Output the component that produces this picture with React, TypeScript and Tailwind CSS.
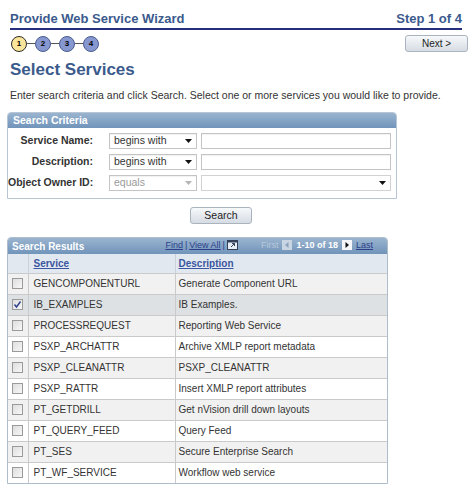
import React from 'react';

const rows = [
  { service: 'GENCOMPONENTURL', desc: 'Generate Component URL', checked: false },
  { service: 'IB_EXAMPLES', desc: 'IB Examples.', checked: true },
  { service: 'PROCESSREQUEST', desc: 'Reporting Web Service', checked: false },
  { service: 'PSXP_ARCHATTR', desc: 'Archive XMLP report metadata', checked: false },
  { service: 'PSXP_CLEANATTR', desc: 'PSXP_CLEANATTR', checked: false },
  { service: 'PSXP_RATTR', desc: 'Insert XMLP report attributes', checked: false },
  { service: 'PT_GETDRILL', desc: 'Get nVision drill down layouts', checked: false },
  { service: 'PT_QUERY_FEED', desc: 'Query Feed', checked: false },
  { service: 'PT_SES', desc: 'Secure Enterprise Search', checked: false },
  { service: 'PT_WF_SERVICE', desc: 'Workflow web service', checked: false },
];

function StepCircle({ n, active }: { n: number; active?: boolean }) {
  return (
    <div
      className={
        active
          ? 'flex h-[16px] w-[16px] items-center justify-center rounded-full border-[1.5px] border-[#2b2b2b] bg-[#fbe59a] text-[8px] font-bold text-black'
          : 'flex h-[16px] w-[16px] items-center justify-center rounded-full border-[1.5px] border-[#4c5b92] bg-[#8797cf] text-[8px] font-bold text-black'
      }
    >
      {n}
    </div>
  );
}

function Arrow({ disabled }: { disabled?: boolean }) {
  return (
    <svg width="7" height="4" viewBox="0 0 7 4" className="shrink-0">
      <path d="M0 0 L7 0 L3.5 4 Z" fill={disabled ? '#b5b5b5' : '#111'} />
    </svg>
  );
}

function SelectBox({ value, disabled }: { value: string; disabled?: boolean }) {
  return (
    <div className="flex h-[16px] w-[88px] items-center justify-between border border-[#c4c4c4] bg-white pl-[4px] pr-[4px] shadow-[inset_0_1px_1px_rgba(0,0,0,0.06)]">
      <span className={disabled ? 'text-[#9a9a9a]' : 'text-[#333]'}>{value}</span>
      <Arrow disabled={disabled} />
    </div>
  );
}

function CheckBox({ checked }: { checked: boolean }) {
  return (
    <div className="flex h-[11px] w-[11px] items-center justify-center border border-[#9a9a9a] bg-gradient-to-br from-[#dedede] to-[#f7f7f7]">
      {checked && (
        <svg width="9" height="9" viewBox="0 0 9 9">
          <path d="M1.5 4.5 L3.5 7 L7.5 1.5" stroke="#2b3f8c" strokeWidth="1.4" fill="none" />
        </svg>
      )}
    </div>
  );
}

export default function App() {
  return (
    <div className="min-h-[492px] w-[474px] bg-white font-['Liberation_Sans',Arial,sans-serif] text-[10.5px] text-[#333]">
      {/* title bar */}
      <div className="ml-[10px] mr-[12px] flex items-end justify-between border-b-2 border-[#272f7c] pt-[11px] pb-[2px] text-[13px] font-bold leading-[15px] text-[#3b5a8c]">
        <span>Provide Web Service Wizard</span>
        <span>Step 1 of 4</span>
      </div>

      {/* steps + next */}
      <div className="mt-[5px] ml-[11px] mr-[6px] flex items-center justify-between">
        <div className="flex items-center">
          <StepCircle n={1} active />
          <div className="h-px w-[8px] bg-[#555]" />
          <StepCircle n={2} />
          <div className="h-px w-[8px] bg-[#555]" />
          <StepCircle n={3} />
          <div className="h-px w-[8px] bg-[#555]" />
          <StepCircle n={4} />
        </div>
        <button className="flex h-[17px] w-[63px] items-center justify-center rounded-[3px] border border-[#a9b4bf] bg-gradient-to-b from-[#f7f9fb] to-[#d6dce3] text-[10px] text-[#222]">
          Next &gt;
        </button>
      </div>

      <h1 className="mt-[8px] ml-[10px] text-[17px] font-bold leading-[20px] text-[#3b5a8c]">Select Services</h1>

      <p className="mt-[9px] ml-[10px] text-[10.5px] leading-[12px] text-[#333]">
        Enter search criteria and click Search. Select one or more services you would like to provide.
      </p>

      {/* search criteria */}
      <div className="mt-[11px] ml-[7px] w-[390px] rounded-t-[4px] border border-[#b7c5d5]">
        <div className="h-[15px] rounded-t-[3px] bg-gradient-to-b from-[#9ab4cf] to-[#7194ba] pl-[5px] text-[10.5px] font-bold leading-[15px] text-white">
          Search Criteria
        </div>
        <div className="flex flex-col gap-[5px] pt-[5px] pb-[7px]">
          {[
            { label: 'Service Name:', op: 'begins with' },
            { label: 'Description:', op: 'begins with' },
          ].map((r) => (
            <div key={r.label} className="flex items-center">
              <div className="w-[85px] whitespace-nowrap text-right font-bold text-[#333]">{r.label}</div>
              <div className="ml-[16px]">
                <SelectBox value={r.op} />
              </div>
              <div className="ml-[4px] h-[16px] w-[190px] border border-[#c4c4c4] bg-white shadow-[inset_0_1px_1px_rgba(0,0,0,0.06)]" />
            </div>
          ))}
          <div className="flex items-center">
            <div className="w-[85px] whitespace-nowrap text-right font-bold text-[#333]">Object Owner ID:</div>
            <div className="ml-[16px]">
              <SelectBox value="equals" disabled />
            </div>
            <div className="ml-[4px] flex h-[16px] w-[190px] items-center justify-end border border-[#d2d2d2] bg-white pr-[4px]">
              <Arrow />
            </div>
          </div>
        </div>
      </div>

      <div className="mt-[8px] flex pl-[190px]">
        <button className="flex h-[17px] w-[62px] items-center justify-center rounded-[3px] border border-[#a9b4bf] bg-gradient-to-b from-[#f7f9fb] to-[#d6dce3] text-[10.5px] text-[#222]">
          Search
        </button>
      </div>

      {/* search results */}
      <div className="mt-[13px] ml-[7px] w-[381px] rounded-t-[4px] border border-[#aebccb]">
        <div className="flex h-[16px] items-center rounded-t-[3px] bg-gradient-to-b from-[#9ab4cf] to-[#7194ba] pl-[4px] pr-[14px] text-[10px]">
          <span className="font-bold text-white">Search Results</span>
          <span className="ml-auto flex items-center text-[9px]">
            <span className="text-[#2c3f8a] underline">Find</span>
            <span className="mx-[2px] text-[#2c3f8a]">|</span>
            <span className="text-[#2c3f8a] underline">View All</span>
            <span className="mx-[2px] text-[#2c3f8a]">|</span>
            <svg width="11" height="10" viewBox="0 0 11 10" className="mb-[3px]">
              <rect x="0.5" y="0.5" width="10" height="9" fill="#e8eef5" stroke="#33415a" />
              <rect x="0.5" y="0.5" width="10" height="2" fill="#33415a" />
              <path d="M4 7 L7.5 3.5 M5 3.5 L7.5 3.5 L7.5 6" stroke="#33415a" strokeWidth="1" fill="none" />
            </svg>
            <span className="ml-[23px] text-[#b7c8da]">First</span>
            <svg width="10" height="10" viewBox="0 0 10 10" className="mb-[2px] ml-[4px]">
              <rect width="10" height="10" fill="#c9d5e2" />
              <path d="M6.5 2 L3 5 L6.5 8 Z" fill="#8ba2bd" />
            </svg>
            <span className="ml-[4px] font-bold text-white">1-10 of 18</span>
            <svg width="10" height="10" viewBox="0 0 10 10" className="mb-[2px] ml-[4px]">
              <rect width="10" height="10" fill="#f4f6f9" />
              <path d="M3.5 2 L7 5 L3.5 8 Z" fill="#111" />
            </svg>
            <span className="ml-[4px] text-[#2c3f8a] underline">Last</span>
          </span>
        </div>
        <table className="w-full border-collapse text-[10px]">
          <thead>
            <tr className="h-[19px] bg-[#e2e8ef]">
              <th className="w-[20px] border-r border-[#c9d1da]" />
              <th className="w-[147px] border-r border-[#c9d1da] pl-[5px] text-left font-bold text-[#3a56a0] underline">
                Service
              </th>
              <th className="pl-[3px] text-left font-bold text-[#3a56a0] underline">Description</th>
            </tr>
          </thead>
          <tbody>
            {rows.map((r, i) => (
              <tr
                key={r.service}
                className={
                  r.checked
                    ? 'h-[21px] border-t border-[#cacaca] bg-[#dde1e3]'
                    : i % 2 === 0
                      ? 'h-[21px] border-t border-[#cacaca] bg-[#f1f1f1]'
                      : 'h-[21px] border-t border-[#cacaca] bg-white'
                }
              >
                <td className="border-r border-[#cacaca] p-0 pl-[4px]">
                  <CheckBox checked={r.checked} />
                </td>
                <td className="border-r border-[#cacaca] p-0 pl-[5px] text-[#333]">{r.service}</td>
                <td className="p-0 pl-[3px] text-[#333]">{r.desc}</td>
              </tr>
            ))}
          </tbody>
        </table>
      </div>
    </div>
  );
}
